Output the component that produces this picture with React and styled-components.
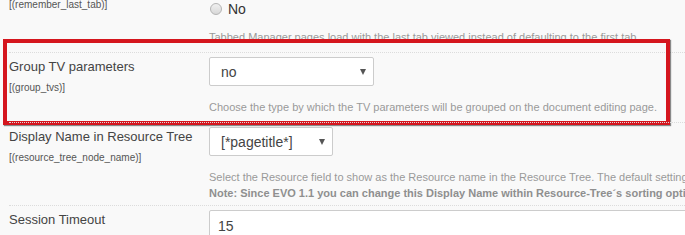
import React from 'react'
import styled, { createGlobalStyle } from 'styled-components'

const GlobalStyle = createGlobalStyle`
  html, body {
    margin: 0;
    padding: 0;
    background: #f9f9f9;
    overflow: hidden;
    font-family: 'Liberation Sans', Arial, sans-serif;
  }
`;

function App() {
  return (
    <>
      <GlobalStyle />
      <Page>
        <Row first>
          <Label>
            <Code first>[(remember_last_tab)]</Code>
          </Label>
          <Control>
            <RadioLine><Radio /> No</RadioLine>
            <Desc first>Tabbed Manager pages load with the last tab viewed instead of defaulting to the first tab.</Desc>
          </Control>
        </Row>

        <Row>
          <Label>
            <Title>Group TV parameters</Title>
            <Code>[(group_tvs)]</Code>
          </Label>
          <Control>
            <Select width="165px">
              <span>no</span>
              <Arrow />
            </Select>
            <Desc>Choose the type by which the TV parameters will be grouped on the document editing page.</Desc>
          </Control>
          <Highlight />
        </Row>

        <Row tight>
          <Label>
            <Title>Display Name in Resource Tree</Title>
            <Code>[(resource_tree_node_name)]</Code>
          </Label>
          <Control>
            <Select width="124px">
              <span>[*pagetitle*]</span>
              <Arrow />
            </Select>
            <Desc>
              Select the Resource field to show as the Resource name in the Resource Tree. The default setting is [*pagetitle*].
              <br />
              <b>Note: Since EVO 1.1 you can change this Display Name within Resource-Tree´s sorting options.</b>
            </Desc>
          </Control>
        </Row>

        <Row>
          <Label>
            <Title>Session Timeout</Title>
          </Label>
          <Control>
            <TextInput>15</TextInput>
          </Control>
        </Row>
      </Page>
    </>
  )
}

const Page = styled.div`
  padding-left: 9px;
  width: 1100px;
`;

const Row = styled.div`
  position: relative;
  display: grid;
  grid-template-columns: 200px 1fr;
  padding: ${p => (p.first ? '0' : '4px')} 0 ${p => (p.tight ? '4px' : '7px')};
  border-top: ${p => (p.first ? 'none' : '1px dotted #dcdcdc')};
`;

const Label = styled.div`
  padding-top: 1px;
`;

const Title = styled.div`
  font-size: 13px;
  line-height: 18px;
  color: #444;
`;

const Code = styled.div`
  margin-top: ${p => (p.first ? '-1px' : '5px')};
  font-size: 10px;
  line-height: ${p => (p.first ? '10px' : '14px')};
  color: #555;
`;

const Control = styled.div`
  display: flex;
  flex-direction: column;
  align-items: flex-start;
`;

const RadioLine = styled.label`
  display: flex;
  align-items: center;
  gap: 6px;
  font-size: 14px;
  line-height: 18px;
  color: #333;
`;

const Radio = styled.span`
  box-sizing: border-box;
  width: 12px;
  height: 12px;
  margin-left: 1px;
  border-radius: 50%;
  border: 1px solid #b4b4b4;
  background: linear-gradient(#f0f0f0, #d8d8d8);
`;

const Select = styled.div`
  box-sizing: border-box;
  width: ${p => p.width};
  height: 29px;
  display: flex;
  align-items: center;
  justify-content: space-between;
  padding: 0 7px 0 11px;
  background: #fff;
  border: 1px solid #ccc;
  border-radius: 2px;
  font-size: 14px;
  color: #444;
`;

const Arrow = styled.span`
  width: 0;
  height: 0;
  border-left: 3.5px solid transparent;
  border-right: 3.5px solid transparent;
  border-top: 6px solid #555;
`;

const Desc = styled.div`
  margin-top: ${p => (p.first ? '11px' : '13px')};
  font-size: 11px;
  line-height: 16px;
  color: #999;
  white-space: nowrap;

  b {
    color: #8f8f8f;
  }
`;

const TextInput = styled.div`
  box-sizing: border-box;
  width: 900px;
  height: 32px;
  padding: 6px 8px;
  background: #fff;
  border: 1px solid #ccc;
  border-radius: 2px;
  font-size: 14px;
  line-height: 18px;
  color: #444;
`;

const Highlight = styled.div`
  position: absolute;
  left: -6px;
  top: -14px;
  width: 667px;
  height: 86px;
  box-sizing: border-box;
  border: 4px solid #d5161e;
  box-shadow: 1px 1px 1px rgba(0, 0, 0, 0.45);
  pointer-events: none;
`;

export default App
